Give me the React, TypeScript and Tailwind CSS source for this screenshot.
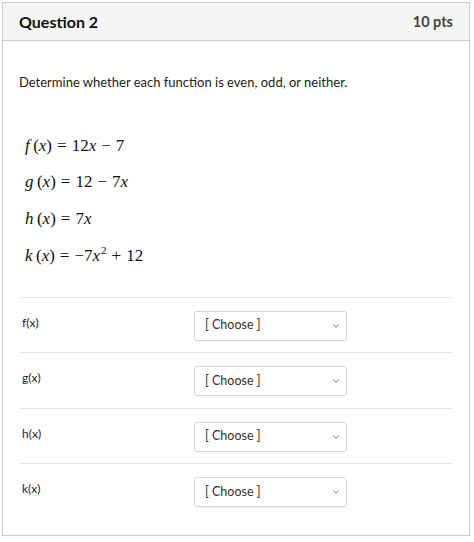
import { ChevronDown } from 'lucide-react';

// Canvas-style quiz question card with dropdown answers per function.
const rows = ['f(x)', 'g(x)', 'h(x)', 'k(x)'];

function V({ children }: { children: string }) {
  return <span className="italic">{children}</span>;
}

function Op({ children }: { children: string }) {
  return <span className="mx-[5px]">{children}</span>;
}

function Eq({ children }: { children: React.ReactNode }) {
  return (
    <div className="h-[36.7px] flex items-center text-[17px] text-[#111]" style={{ fontFamily: '"Liberation Serif", "DejaVu Serif", serif' }}>
      {children}
    </div>
  );
}

export default function App() {
  return (
    <div className="w-[474px] h-[542px] bg-white p-[2px] pr-[4px]" style={{ fontFamily: 'Lato, "Liberation Sans", sans-serif' }}>
      <div className="border border-[#c7cdd1] h-[534px] flex flex-col">
        <div className="h-[38px] bg-[#f5f5f5] border-b border-[#c7cdd1] flex items-center justify-between px-[16px]">
          <span className="text-[16px] font-bold text-[#111]">Question 2</span>
          <span className="text-[14.5px] font-bold text-[#444]">10 pts</span>
        </div>
        <div className="px-[16px] pt-[31px]">
          <p className="text-[13px] text-[#222] leading-5">Determine whether each function is even, odd, or neither.</p>
          <div className="mt-[35px] pl-[6px] flex flex-col">
            <Eq><V>f</V>&thinsp;(<V>x</V>)<Op>=</Op>12<V>x</V><Op>−</Op>7</Eq>
            <Eq><V>g</V>&thinsp;(<V>x</V>)<Op>=</Op>12<Op>−</Op>7<V>x</V></Eq>
            <Eq><V>h</V>&thinsp;(<V>x</V>)<Op>=</Op>7<V>x</V></Eq>
            <Eq><V>k</V>&thinsp;(<V>x</V>)<Op>=</Op>−7<V>x</V><sup className="text-[11px] ml-[1px]">2</sup><Op>+</Op>12</Eq>
          </div>
          <div className="mt-[23px]">
            {rows.map((r) => (
              <div key={r} className="border-t border-[#e6e8ea] h-[55.5px] pt-[13px] flex">
                <div className="w-[175px] text-[12px] text-[#222] pl-[3px] pt-[3px]">{r}</div>
                <div className="w-[153px] h-[30px] border border-[#d4d7da] rounded-[3px] flex items-center justify-between pl-[10px] pr-[5px] text-[12.5px] text-[#333] shadow-[0_1px_1px_rgba(0,0,0,0.04)]">
                  <span>[ Choose ]</span>
                  <ChevronDown className="w-[10px] h-[10px] text-[#555]" strokeWidth={2} />
                </div>
              </div>
            ))}
          </div>
        </div>
      </div>
    </div>
  );
}
